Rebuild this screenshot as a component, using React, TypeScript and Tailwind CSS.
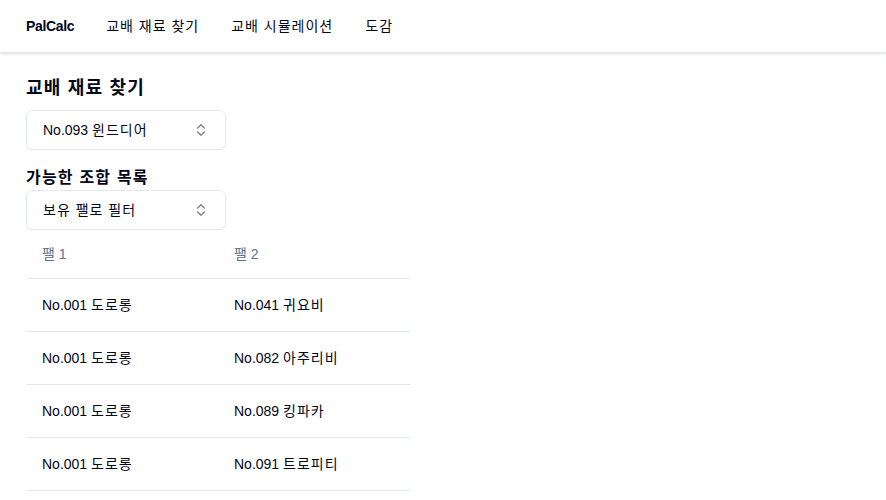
import { ChevronsUpDown } from "lucide-react";

const NAV = ["교배 재료 찾기", "교배 시뮬레이션", "도감"];

const ROWS = [
  [["No.001", "도로롱"], ["No.041", "귀요비"]],
  [["No.001", "도로롱"], ["No.082", "아주리비"]],
  [["No.001", "도로롱"], ["No.089", "킹파카"]],
  [["No.001", "도로롱"], ["No.091", "트로피티"]],
];

// hangul runs get a bit of tracking so they sit as wide as in the original
function Ko({ children }: { children: string }) {
  return <span className="tracking-[1px]">{children}</span>;
}

function PalName({ no, name }: { no: string; name: string }) {
  return (
    <>
      {no} <Ko>{name}</Ko>
    </>
  );
}

function SelectBox({ children }: { children: React.ReactNode }) {
  return (
    <button className="flex h-10 w-[200px] items-center justify-between rounded-md border border-slate-200 bg-white px-4 text-sm text-slate-950">
      <span>{children}</span>
      <ChevronsUpDown className="h-4 w-4 opacity-50" strokeWidth={2} />
    </button>
  );
}

export default function App() {
  return (
    <div className="min-h-screen bg-white text-slate-950 font-['Liberation_Sans','Noto_Sans_CJK_KR',sans-serif]">
      <nav className="flex h-[53px] items-center gap-8 border-b border-slate-200 px-[26px] text-sm shadow-sm">
        <span className="font-bold tracking-tight">PalCalc</span>
        {NAV.map((item) => (
          <Ko key={item}>{item}</Ko>
        ))}
      </nav>

      <main className="px-[26px] pt-[21px]">
        <h1 className="text-lg font-bold leading-7 tracking-[1.2px]">교배 재료 찾기</h1>
        <div className="mt-2">
          <SelectBox>
            <PalName no="No.093" name="윈드디어" />
          </SelectBox>
        </div>

        <h2 className="mt-4 text-base font-semibold leading-6 tracking-[1.2px]">
          가능한 조합 목록
        </h2>
        <SelectBox>
          <Ko>보유 팰로 필터</Ko>
        </SelectBox>

        <table className="w-[384px] table-fixed text-sm">
          <thead>
            <tr className="h-12 border-b border-slate-200 text-left text-slate-500">
              <th className="px-4 font-normal">팰 1</th>
              <th className="px-4 font-normal">팰 2</th>
            </tr>
          </thead>
          <tbody>
            {ROWS.map(([a, b], i) => (
              <tr key={i} className="h-[53px] border-b border-slate-200">
                <td className="px-4">
                  <PalName no={a[0]} name={a[1]} />
                </td>
                <td className="px-4">
                  <PalName no={b[0]} name={b[1]} />
                </td>
              </tr>
            ))}
          </tbody>
        </table>
      </main>
    </div>
  );
}
